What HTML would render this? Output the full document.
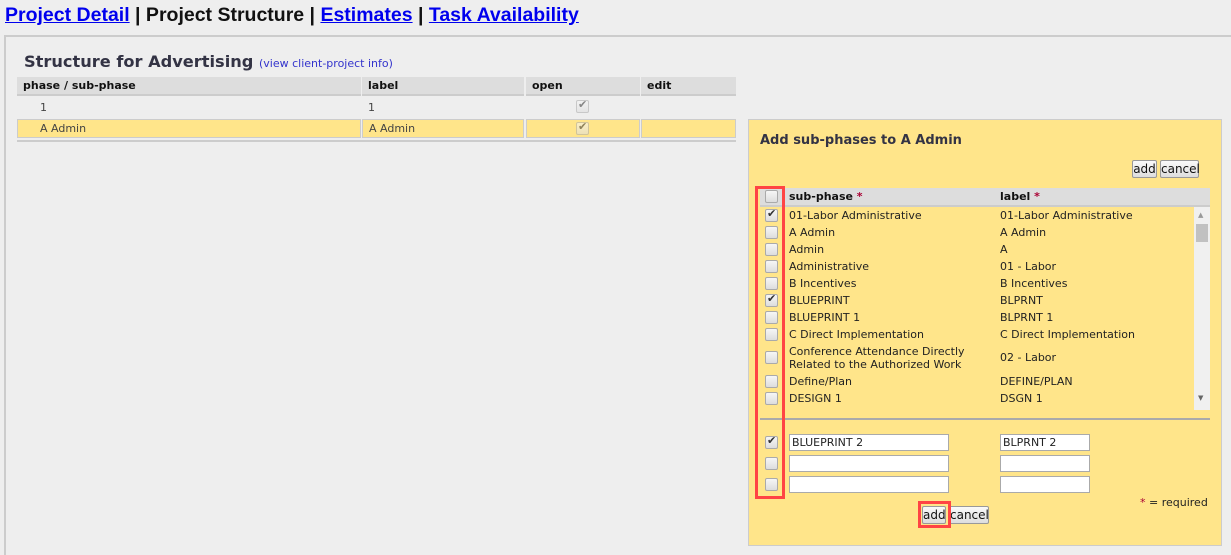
<!DOCTYPE html>
<html><head><meta charset="utf-8"><style>
*{box-sizing:border-box;margin:0;padding:0}
body{width:1231px;height:548px;background:#eee;font-family:"DejaVu Sans","Liberation Sans",sans-serif;font-size:11px;color:#222;position:relative;overflow:hidden}
.a{position:absolute;white-space:nowrap}
.nav{left:5px;top:4px;font-family:"Liberation Sans",sans-serif;font-weight:bold;font-size:19.5px;color:#111}
.nav a{color:#00e;text-decoration:underline}
.panel{left:4px;top:35px;width:1240px;height:520px;border-top:2px solid #ccc;border-left:2px solid #ccc}
.th{background:#ddd;border-bottom:2px solid #ccc;font-weight:bold;height:19px;line-height:17px;padding-left:6px;color:#111}
.tdy{background:#ffe58a;border:1px solid #ccc;height:19px;line-height:17px;padding-left:6px;color:#444}
.cb{position:absolute;width:13px;height:13px;border:1px solid #aaa;border-radius:2px;background:linear-gradient(#f6f6f6,#ddd)}
.cb.k::after{content:"✔";position:absolute;left:1px;top:-3px;font-size:11px;color:#333}
.cb.d{opacity:.55}
.yp{left:748px;top:119px;width:474px;height:427px;background:#ffe58a;border:1px solid #ccc}
.btn{position:absolute;height:18px;border:1px solid #999;border-radius:2px;background:linear-gradient(#fafafa,#ddd);font-size:12px;line-height:16px;text-align:center;color:#111;font-family:"DejaVu Sans",sans-serif}
.inp{position:absolute;height:17px;background:#fff;border:1px solid #aaa;padding-left:2px;line-height:15px;font-size:11px}
.r{position:absolute;color:#222}
.red{position:absolute;border:3px solid #f44}
</style></head><body>
<div class="a nav"><a>Project Detail</a> | Project Structure | <a>Estimates</a> | <a>Task Availability</a></div>
<div class="a panel"></div>
<div class="a" style="left:24px;top:52px;font-size:16.2px;font-weight:bold;color:#334">Structure for Advertising <span style="font-size:11px;font-weight:normal;color:#33c">(view client-project info)</span></div>
<div class="a th" style="left:17px;top:77px;width:344px">phase / sub-phase</div>
<div class="a th" style="left:362px;top:77px;width:162px">label</div>
<div class="a th" style="left:526px;top:77px;width:114px">open</div>
<div class="a th" style="left:641px;top:77px;width:95px">edit</div>
<div class="a" style="left:40px;top:101px;color:#444">1</div>
<div class="a" style="left:368px;top:101px;color:#444">1</div>
<div class="cb k d" style="left:576px;top:100px"></div>
<div class="a tdy" style="left:17px;top:119px;width:344px;padding-left:22px">A Admin</div>
<div class="a tdy" style="left:362px;top:119px;width:162px">A Admin</div>
<div class="a tdy" style="left:526px;top:119px;width:114px"></div>
<div class="a tdy" style="left:641px;top:119px;width:95px"></div>
<div class="cb k d" style="left:576px;top:122px"></div>
<div class="a" style="left:17px;top:140px;width:719px;border-top:2px solid #ccc"></div>

<div class="a yp"></div>
<div class="a" style="left:760px;top:133px;font-size:13px;font-weight:bold;color:#334">Add sub-phases to A Admin</div>
<div class="btn" style="left:1132px;top:160px;width:25px">add</div>
<div class="btn" style="left:1160px;top:160px;width:39px">cancel</div>
<div class="a" style="left:760px;top:188px;width:450px;height:19px;background:#ddd;border-bottom:2px solid #ccc"></div>
<div class="a" style="left:789px;top:190px;font-weight:bold;color:#111">sub-phase <span style="color:#a03">*</span></div>
<div class="a" style="left:1000px;top:190px;font-weight:bold;color:#111">label <span style="color:#a03">*</span></div>
<div class="cb" style="left:765px;top:190px"></div>
<div class="a" style="left:1194px;top:207px;width:16px;height:203px;background:#f0f0f0"></div>
<div class="a" style="left:1196px;top:224px;width:12px;height:18px;background:#c1c1c1"></div>
<div class="a" style="left:1198px;top:211px;font-size:7px;color:#999">▲</div>
<div class="a" style="left:1198px;top:394px;font-size:7px;color:#666">▼</div>
<div class="cb k" style="left:765px;top:209px"></div><div class="r" style="left:789px;top:209px">01-Labor Administrative</div><div class="r" style="left:1000px;top:209px">01-Labor Administrative</div>
<div class="cb" style="left:765px;top:226px"></div><div class="r" style="left:789px;top:226px">A Admin</div><div class="r" style="left:1000px;top:226px">A Admin</div>
<div class="cb" style="left:765px;top:243px"></div><div class="r" style="left:789px;top:243px">Admin</div><div class="r" style="left:1000px;top:243px">A</div>
<div class="cb" style="left:765px;top:260px"></div><div class="r" style="left:789px;top:260px">Administrative</div><div class="r" style="left:1000px;top:260px">01 - Labor</div>
<div class="cb" style="left:765px;top:277px"></div><div class="r" style="left:789px;top:277px">B Incentives</div><div class="r" style="left:1000px;top:277px">B Incentives</div>
<div class="cb k" style="left:765px;top:294px"></div><div class="r" style="left:789px;top:294px">BLUEPRINT</div><div class="r" style="left:1000px;top:294px">BLPRNT</div>
<div class="cb" style="left:765px;top:311px"></div><div class="r" style="left:789px;top:311px">BLUEPRINT 1</div><div class="r" style="left:1000px;top:311px">BLPRNT 1</div>
<div class="cb" style="left:765px;top:328px"></div><div class="r" style="left:789px;top:328px">C Direct Implementation</div><div class="r" style="left:1000px;top:328px">C Direct Implementation</div>
<div class="cb" style="left:765px;top:351px"></div><div class="r" style="left:789px;top:345px;line-height:13px">Conference Attendance Directly<br>Related to the Authorized Work</div><div class="r" style="left:1000px;top:351px">02 - Labor</div>
<div class="cb" style="left:765px;top:375px"></div><div class="r" style="left:789px;top:375px">Define/Plan</div><div class="r" style="left:1000px;top:375px">DEFINE/PLAN</div>
<div class="cb" style="left:765px;top:392px"></div><div class="r" style="left:789px;top:392px">DESIGN 1</div><div class="r" style="left:1000px;top:392px">DSGN 1</div>
<div class="a" style="left:760px;top:418px;width:450px;border-top:2px solid #aaa"></div>
<div class="cb k" style="left:765px;top:436px"></div><div class="inp" style="left:789px;top:434px;width:160px">BLUEPRINT 2</div><div class="inp" style="left:1000px;top:434px;width:90px">BLPRNT 2</div>
<div class="cb" style="left:765px;top:457px"></div><div class="inp" style="left:789px;top:455px;width:160px"></div><div class="inp" style="left:1000px;top:455px;width:90px"></div>
<div class="cb" style="left:765px;top:478px"></div><div class="inp" style="left:789px;top:476px;width:160px"></div><div class="inp" style="left:1000px;top:476px;width:90px"></div>
<div class="a" style="left:1140px;top:496px"><span style="color:#a03">*</span> = required</div>
<div class="btn" style="left:922px;top:506px;width:24px">add</div>
<div class="btn" style="left:949px;top:506px;width:40px">cancel</div>
<div class="red" style="left:755px;top:186px;width:30px;height:313px"></div>
<div class="red" style="left:918px;top:501px;width:33px;height:27px"></div>
</body></html>
